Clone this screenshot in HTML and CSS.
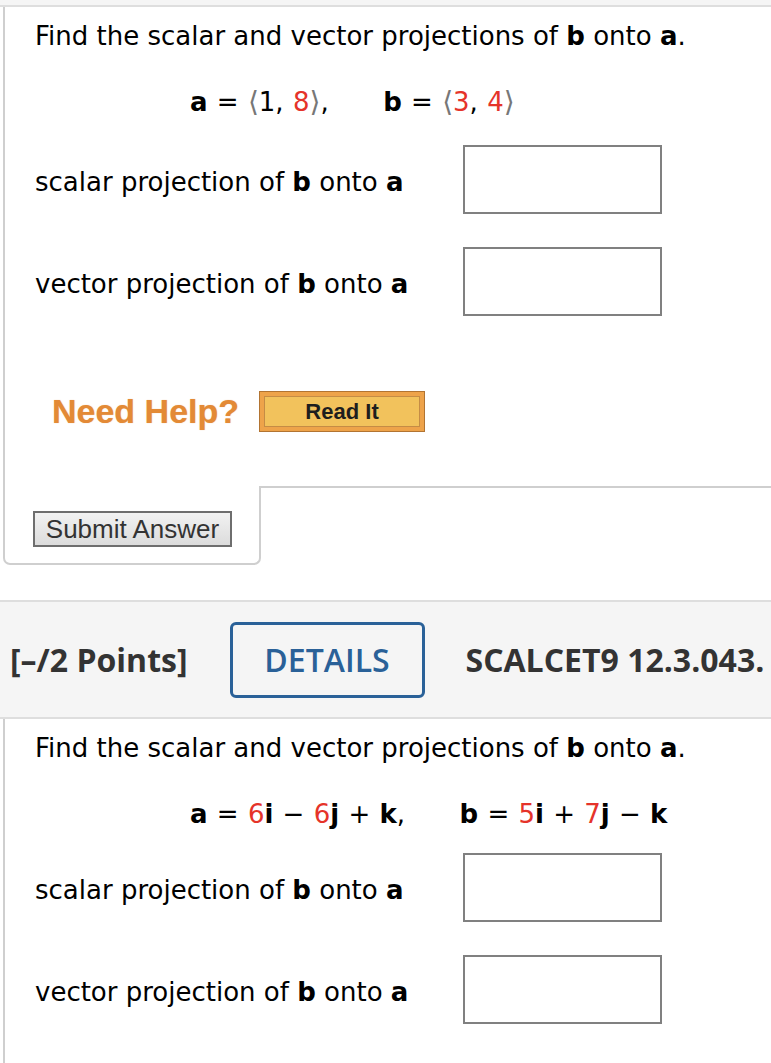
FILE: index.html
```html
<!DOCTYPE html>
<html lang="en">
<head>
<meta charset="UTF-8">
<title>Vector projections</title>
<link rel="stylesheet" href="styles.css">
</head>
<body>

<div class="page-top"></div>

<div class="question">
  <div class="question-body">
    <p class="prompt">Find the scalar and vector projections of <b>b</b> onto <b>a</b>.</p>
    <p class="equation">
      <b>a</b> = <span class="ang">&#10216;</span>1, <span class="red">8</span><span class="ang">&#10217;</span>,
      <span class="eq-gap"></span>
      <b>b</b> = <span class="ang">&#10216;</span><span class="red">3</span>, <span class="red">4</span><span class="ang">&#10217;</span>
    </p>

    <div class="answer-row">
      <span class="label">scalar projection of <b>b</b> onto <b>a</b></span>
      <input class="answer-box" type="text">
    </div>
    <div class="answer-row">
      <span class="label">vector projection of <b>b</b> onto <b>a</b></span>
      <input class="answer-box" type="text">
    </div>

    <div class="help-row">
      <span class="need-help">Need Help?</span>
      <button class="read-it"><span>Read It</span></button>
    </div>
  </div>

  <div class="question-foot">
    <div class="submit-cell">
      <button class="submit-btn">Submit Answer</button>
    </div>
    <div class="foot-fill"></div>
  </div>
</div>

<div class="question-head">
  <span class="points">[&ndash;/2 Points]</span>
  <button class="details-btn">DETAILS</button>
  <span class="ref">SCALCET9 12.3.043.</span>
</div>

<div class="question question-2">
  <div class="question-body">
    <p class="prompt">Find the scalar and vector projections of <b>b</b> onto <b>a</b>.</p>
    <p class="equation">
      <b>a</b> = <span class="red">6</span><b>i</b> &minus; <span class="red">6</span><b>j</b> + <b>k</b>,
      <span class="eq-gap"></span>
      <b>b</b> = <span class="red">5</span><b>i</b> + <span class="red">7</span><b>j</b> &minus; <b>k</b>
    </p>

    <div class="answer-row">
      <span class="label">scalar projection of <b>b</b> onto <b>a</b></span>
      <input class="answer-box" type="text">
    </div>
    <div class="answer-row">
      <span class="label">vector projection of <b>b</b> onto <b>a</b></span>
      <input class="answer-box" type="text">
    </div>
  </div>
</div>

</body>
</html>
```

FILE: styles.css
```css
body {
  margin: 0;
  font-family: 'DejaVu Sans', Verdana, sans-serif;
  color: #000;
  background: #fff;
}

.page-top {
  height: 5px;
  background: #f5f5f5;
  border-bottom: 2px solid #dedede;
}

.question-body {
  border-left: 2px solid #cfcfcf;
  margin-left: 3px;
  padding: 15px 0 54px 30px;
}

.prompt {
  margin: 0;
  font-size: 26px;
  line-height: 28px;
}

.equation {
  margin: 38px 0 0 155px;
  font-size: 26px;
  line-height: 28px;
  word-spacing: 1px;
  white-space: nowrap;
}

.equation .red {
  color: #e5332a;
}

.equation .ang {
  color: #777;
  font-size: 28px;
}

.eq-gap {
  display: inline-block;
  width: 36px;
}

.answer-row {
  display: flex;
  align-items: center;
  margin-top: 29px;
}

.answer-row + .answer-row {
  margin-top: 33px;
}

.question-2 .answer-row {
  margin-top: 25px;
}

.question-2 .answer-row + .answer-row {
  margin-top: 33px;
}

.label {
  width: 428px;
  padding-top: 5px;
  font-size: 26px;
}

.answer-box {
  width: 199px;
  height: 69px;
  box-sizing: border-box;
  border: 2px solid #808080;
  margin: 0;
  padding: 0;
  background: #fff;
}

.help-row {
  display: flex;
  align-items: center;
  gap: 20px;
  margin: 75px 0 0 17px;
  height: 41px;
}

.need-help {
  font-family: 'Liberation Sans', Arial, sans-serif;
  font-weight: bold;
  font-size: 34px;
  color: #e38a36;
  text-shadow: 0 0 1px rgba(227, 138, 54, 0.6);
}

.read-it {
  width: 166px;
  height: 41px;
  padding: 4px;
  border: 1px solid #b27432;
  background: #eea34a;
  cursor: pointer;
}

.read-it span {
  display: flex;
  justify-content: center;
  align-items: center;
  height: 100%;
  box-sizing: border-box;
  border: 1px solid #c58c45;
  background: #f2c25c;
  font-family: 'Liberation Sans', Arial, sans-serif;
  font-weight: bold;
  font-size: 22px;
  color: #1e1e1e;
}

.question-foot {
  display: flex;
}

.submit-cell {
  width: 258px;
  margin-left: 3px;
  padding: 25px 0 16px 28px;
  box-sizing: border-box;
  border: 2px solid #cfcfcf;
  border-top: none;
  border-radius: 0 0 7px 7px;
}

.foot-fill {
  flex: 1;
  border-top: 2px solid #cfcfcf;
}

.submit-btn {
  width: 199px;
  height: 36px;
  border: 2px solid #6e6e6e;
  background: linear-gradient(#f2f2f2, #dcdcdc);
  font-family: 'Liberation Sans', Arial, sans-serif;
  font-size: 26px;
  color: #333;
  padding: 0;
  cursor: pointer;
}

.question-head {
  display: flex;
  align-items: center;
  margin-top: 35px;
  height: 115px;
  padding-left: 10px;
  background: #f5f5f5;
  border-top: 2px solid #dedede;
  border-bottom: 2px solid #dedede;
  font-family: 'Open Sans', sans-serif;
}

.points,
.ref {
  font-size: 32px;
  font-weight: bold;
  color: #333;
}

.details-btn {
  width: 195px;
  height: 76px;
  margin: 0 41px 0 42px;
  border: 3px solid #2a6198;
  border-radius: 6px;
  background: transparent;
  font-family: 'Open Sans', sans-serif;
  font-size: 32px;
  font-weight: 600;
  color: #2a6198;
  cursor: pointer;
}
```
